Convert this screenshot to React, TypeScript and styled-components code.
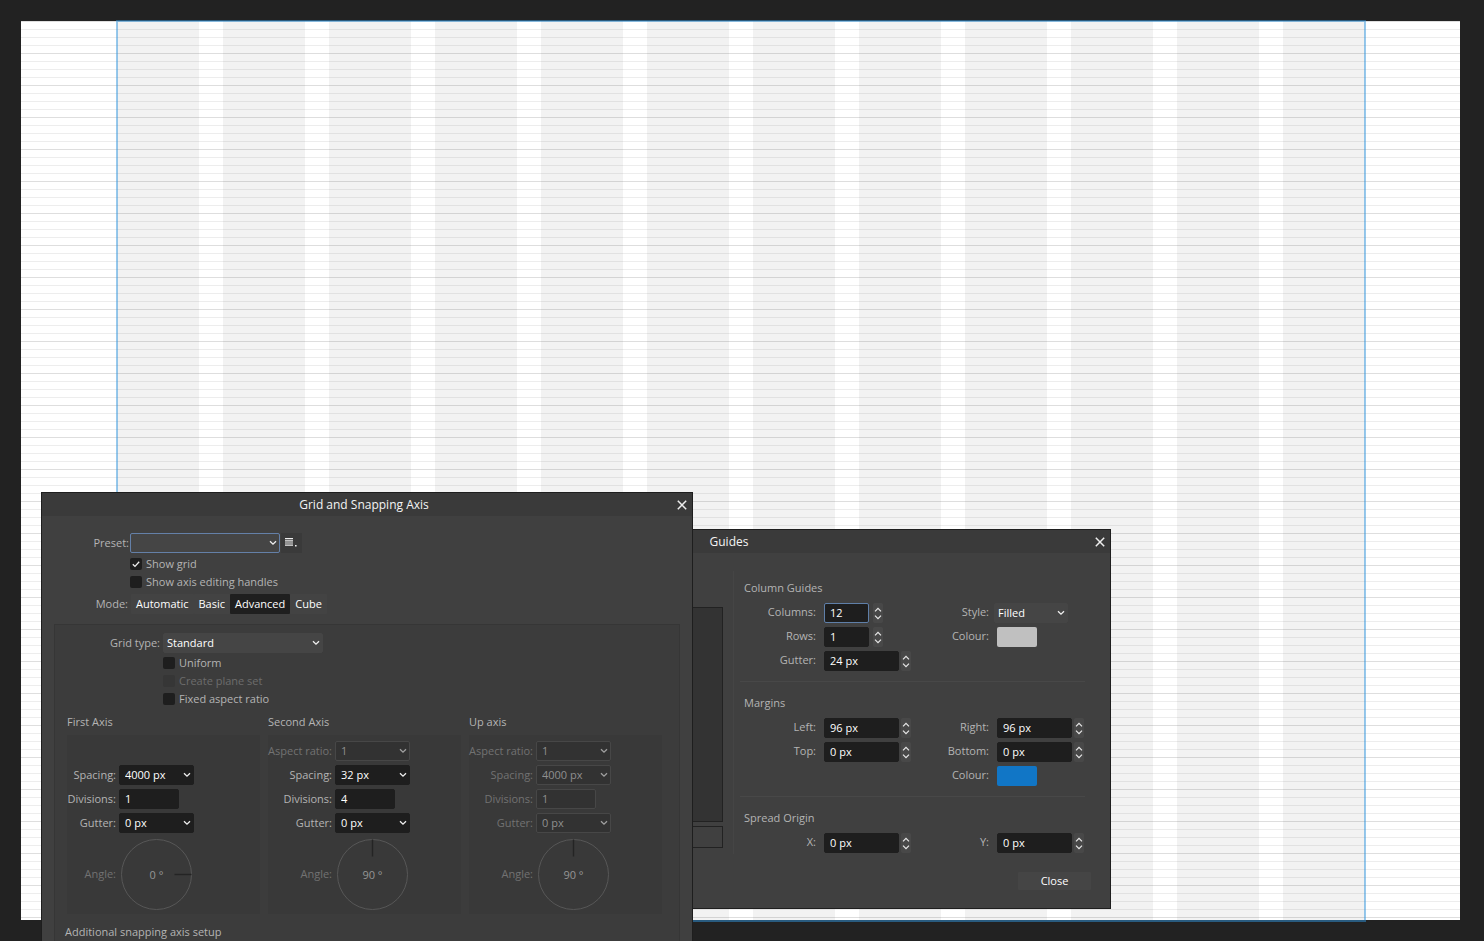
import React, { useId, useState } from 'react';
import styled, { createGlobalStyle, css } from 'styled-components';

const GlobalStyle = createGlobalStyle`
  *, *::before, *::after { box-sizing: border-box; }
  body {
    margin: 0;
    background: #222;
  }
  body, button, input, select {
    font-family: "Open Sans", "Noto Sans", sans-serif;
    font-size: 11px;
    line-height: 20px;
  }
`;

/* ---------- Artboard ---------- */

const Workspace = styled.main`
  position: relative;
  display: flex;
  height: 100vh;
  padding: 21px 24px 21px 21px;
  overflow: hidden;
  background: #222;
  color: #b4b4b4;
`;

const Artboard = styled.section`
  position: relative;
  display: flex;
  flex: 1;
  padding: 0 95px 0 96px;
  background: #fff;

  &::after {
    content: '';
    position: absolute;
    inset: 0;
    background:
      repeating-linear-gradient(to bottom, #00000010 0 1px, transparent 1px 32px),
      repeating-linear-gradient(to bottom, #00000012 0 1px, transparent 1px 8px);
  }
`;

const Columns = styled.div`
  position: relative;
  display: flex;
  flex: 1;
  gap: 24px;

  &::after {
    content: '';
    position: absolute;
    z-index: 1;
    inset: -1px -1px -2px;
    border: 2px solid #2f93dc80;
  }
`;

const Column = styled.div`
  flex: 1;
  background: #f2f2f2;
`;

/* ---------- Windows ---------- */

const Window = styled.section<{ $left: number; $top: number; $width: number }>`
  position: absolute;
  z-index: 2;
  left: ${(p) => p.$left}px;
  top: ${(p) => p.$top}px;
  width: ${(p) => p.$width}px;
  border: 1px solid #1e1e1e;
  background: #404040;
`;

const TitleBar = styled.header<{ $lead: number }>`
  display: grid;
  grid-template-columns: ${(p) => p.$lead}px 1fr 20px;
  align-items: center;
  height: 23px;
  background: #3a3a3a;
`;

const Title = styled.h2`
  grid-column: 2;
  margin: 0;
  font-size: 12px;
  font-weight: 400;
  text-align: center;
  color: #f4f4f4;
`;

const CloseIconButton = styled.button`
  display: grid;
  place-items: center start;
  height: 20px;
  padding: 0 0 0 5px;
  border: 0;
  background: none;
  color: #eee;
`;

/* ---------- Form controls ---------- */

const Row = styled.div<{ $gap?: number }>`
  display: flex;
  align-items: center;
  gap: ${(p) => p.$gap ?? 3}px;
`;

const Label = styled.label<{ $width: number; $dim?: boolean }>`
  width: ${(p) => p.$width}px;
  flex: none;
  text-align: right;
  white-space: nowrap;
  color: ${(p) => (p.$dim ? '#727272' : '#b4b4b4')};
`;

const disabledField = css`
  &:disabled {
    border: 1px solid #474747;
    background: #323232;
    color: #8f8f8f;
    opacity: 1;
  }
`;

const TextInput = styled.input<{ $width: number; $active?: boolean }>`
  width: ${(p) => p.$width}px;
  height: 20px;
  padding: 0 5px;
  border: 1px solid ${(p) => (p.$active ? '#5f7fa8' : '#1e1e1e')};
  border-radius: 2px;
  outline: 0;
  background: #1e1e1e;
  color: #fff;
  ${disabledField}
`;

const SelectWrap = styled.span<{ $width: number }>`
  display: grid;
  grid-template-columns: 1fr 11px;
  align-items: center;
  width: ${(p) => p.$width}px;

  svg {
    grid-area: 1 / 2;
    pointer-events: none;
  }
`;

const tones = {
  dark: css`
    border: 1px solid #1e1e1e;
    background: #1e1e1e;
  `,
  flat: css`
    border: 1px solid #454545;
    background: #454545;
  `,
  focus: css`
    border: 1px solid #6480a8;
    background: #454545;
  `,
};

const NativeSelect = styled.select<{ $tone: keyof typeof tones }>`
  grid-area: 1 / 1 / 2 / 3;
  width: 100%;
  height: 20px;
  padding: 0 12px 0 ${(p) => (p.$tone === 'flat' ? 3 : 5)}px;
  border-radius: 2px;
  outline: 0;
  appearance: none;
  line-height: 16px;
  color: #fff;
  ${(p) => tones[p.$tone]}
  ${disabledField}
`;

const CheckLabel = styled.label<{ $dim?: boolean }>`
  display: flex;
  align-items: center;
  gap: 4px;
  height: 18px;
  color: ${(p) => (p.$dim ? '#6c6c6c' : '#b4b4b4')};
`;

const CheckMark = styled.span<{ $dim?: boolean }>`
  display: grid;
  width: 12px;
  height: 12px;
  border-radius: 2px;
  background: ${(p) => (p.$dim ? '#363636' : '#1e1e1e')};

  input, svg {
    grid-area: 1 / 1;
    margin: 0;
  }
  input {
    width: 12px;
    height: 12px;
    appearance: none;
  }
  svg {
    pointer-events: none;
  }
`;

const SpinnerStack = styled.span`
  display: flex;
  flex-direction: column;
  width: 10px;
  height: 20px;
  padding: 3px 0;
  border-radius: 2px;
  background: #484848;
`;

const SpinnerButton = styled.button`
  display: grid;
  flex: 1;
  place-items: center;
  padding: 0;
  border: 0;
  background: none;
  line-height: 0;
  color: #e8e8e8;
`;

const Swatch = styled.button<{ $color: string }>`
  width: 40px;
  height: 20px;
  border: 0;
  border-radius: 2px;
  background: ${(p) => p.$color};
`;

/* ---------- Grid window layout ---------- */

const GridBody = styled.div`
  padding: 17px 12px 0;
`;

const PresetMenuButton = styled.button`
  display: grid;
  place-items: center start;
  width: 21px;
  height: 20px;
  padding: 0 0 0 3px;
  border: 0;
  background: #3a3a3a;
  color: #eee;
`;

const CheckList = styled.div<{ $indent: number; $top: number }>`
  display: flex;
  flex-direction: column;
  align-items: flex-start;
  margin: ${(p) => p.$top}px 0 3px ${(p) => p.$indent}px;
`;

const ModeTabs = styled.div`
  display: flex;
`;

const ModeTab = styled.button<{ $selected: boolean }>`
  height: 20px;
  padding: 0 5px;
  border: 0;
  border-radius: 1px;
  background: ${(p) => (p.$selected ? '#1f1f1f' : '#434343')};
  color: #fff;
`;

const Panel = styled.div`
  margin-top: 10px;
  padding: 8px 17px 24px 10px;
  border: 1px solid #363636;
  background: #3c3c3c;
`;

const Axes = styled.div`
  display: grid;
  grid-template-columns: repeat(3, 1fr);
  gap: 8px;
  padding: 1px 0 0 2px;
`;

const Heading = styled.h3`
  margin: 0;
  font-size: 11px;
  font-weight: 400;
  color: #b4b4b4;
`;

const AdditionalHeading = styled(Heading)`
  margin-top: 8px;
`;

const AxisBox = styled.div`
  display: flex;
  flex-direction: column;
  justify-content: flex-end;
  gap: 4px;
  height: 179px;
  margin-top: 3px;
  padding-bottom: 4px;
  background: #393939;
`;

const Dial = styled.span`
  display: grid;
  place-items: center;
  margin: 2px 0 0 2px;

  svg, input {
    grid-area: 1 / 1;
  }
  input {
    width: 40px;
    padding: 0;
    border: 0;
    background: none;
    text-align: center;
    color: #959595;
  }
`;

/* ---------- Guides window layout ---------- */

const GuidesBody = styled.div`
  display: flex;
  padding: 0 19px 18px 15px;
`;

const Sidebar = styled.div`
  display: flex;
  flex-direction: column;
  gap: 4px;
  width: 360px;
  padding-top: 54px;
`;

const GuideList = styled.div`
  height: 215px;
  border: 1px solid #222;
  background: #333;
`;

const GuideToolbar = styled.div`
  height: 22px;
  border: 1px solid #222;
`;

const Details = styled.div`
  flex: 1;
  padding-left: 10px;
  padding-top: 25px;

  label {
    padding-bottom: 2px;
    line-height: 18px;
  }
`;

const Divider = styled.div`
  width: 1px;
  margin: 18px 0 36px 10px;
  background: #454545;
`;

const Fields = styled.div`
  display: grid;
  grid-template-columns: 176px 1fr;
  margin-top: 5px;
`;

const FieldColumn = styled.div`
  display: flex;
  flex-direction: column;
  gap: 4px;
`;

const Rule = styled.hr`
  height: 1px;
  margin: 10px 6px 11px -4px;
  border: 0;
  background: #484848;
`;

const Footer = styled.footer`
  display: flex;
  justify-content: flex-end;
  margin-top: 19px;
`;

const CloseButton = styled.button`
  width: 73px;
  height: 18px;
  padding: 0;
  border: 0;
  border-radius: 1px;
  background: #454545;
  line-height: 18px;
  color: #fff;
`;

/* ---------- Icons ---------- */

const CrossIcon = () => (
  <svg width="10" height="10" viewBox="0 0 10 10" fill="none" stroke="currentColor" strokeWidth="1.5">
    <path d="M.8.8l8.4 8.4M9.2.8L.8 9.2" />
  </svg>
);

const ChevronIcon = ({ dim }: { dim?: boolean }) => (
  <svg width="8" height="6" viewBox="0 0 8 6" fill="none" stroke={dim ? '#a0a0a0' : '#f0f0f0'} strokeWidth="1.3">
    <path d="M1 1.2l3 3 3-3" />
  </svg>
);

const MenuIcon = () => (
  <svg width="14" height="10" viewBox="0 0 14 10" fill="currentColor">
    <path d="M1 0h8v1.2H1zM1 2.2h8v1.2H1zM1 4.4h8v1.2H1zM1 6.6h8v1.2H1zM11 7h1.6v1.6H11z" />
  </svg>
);

const TickIcon = () => (
  <svg width="12" height="12" viewBox="0 0 12 12" fill="none" stroke="#f0f0f0" strokeWidth="1.3">
    <path d="M2.8 6.2l2.2 2.2 4.2-4.6" />
  </svg>
);

/* ---------- Components ---------- */

function TitledBar({ title, lead }: { title: string; lead: number }) {
  return (
    <TitleBar $lead={lead}>
      <Title>{title}</Title>
      <CloseIconButton aria-label={`Close ${title}`}>
        <CrossIcon />
      </CloseIconButton>
    </TitleBar>
  );
}

type DropDownProps = {
  label: string;
  labelWidth: number;
  width: number;
  value: string;
  tone?: keyof typeof tones;
  gap?: number;
  disabled?: boolean;
  children?: React.ReactNode;
};

function DropDown({ label, labelWidth, width, value, tone = 'dark', gap, disabled, children }: DropDownProps) {
  const id = useId();
  return (
    <Row $gap={gap}>
      <Label htmlFor={id} $width={labelWidth} $dim={disabled}>{label}</Label>
      <SelectWrap $width={width}>
        <NativeSelect id={id} $tone={tone} disabled={disabled} defaultValue={value}>
          <option>{value}</option>
        </NativeSelect>
        <ChevronIcon dim={disabled} />
      </SelectWrap>
      {children}
    </Row>
  );
}

function Check({ label, checked, disabled }: { label: string; checked?: boolean; disabled?: boolean }) {
  const [on, setOn] = useState(Boolean(checked));
  return (
    <CheckLabel $dim={disabled}>
      <CheckMark $dim={disabled}>
        <input type="checkbox" checked={on} disabled={disabled} onChange={() => setOn(!on)} />
        {on && <TickIcon />}
      </CheckMark>
      {label}
    </CheckLabel>
  );
}

type AxisProps = {
  title: string;
  labelWidth: number;
  aspect?: string;
  spacing: string;
  divisions: string;
  angle: number;
  disabled?: boolean;
};

function Axis({ title, labelWidth, aspect, spacing, divisions, angle, disabled }: AxisProps) {
  const divisionsId = useId();
  const angleId = useId();
  return (
    <div>
      <Heading>{title}</Heading>
      <AxisBox>
        {aspect && <DropDown label="Aspect ratio:" labelWidth={labelWidth} width={75} value={aspect} disabled />}
        <DropDown label="Spacing:" labelWidth={labelWidth} width={75} value={spacing} disabled={disabled} />
        <Row>
          <Label htmlFor={divisionsId} $width={labelWidth} $dim={disabled}>Divisions:</Label>
          <TextInput id={divisionsId} $width={60} defaultValue={divisions} disabled={disabled} />
        </Row>
        <DropDown label="Gutter:" labelWidth={labelWidth} width={75} value="0 px" disabled={disabled} />
        <Row>
          <Label htmlFor={angleId} $width={labelWidth} $dim>Angle:</Label>
          <Dial>
            <svg width="71" height="71" viewBox="0 0 71 71" fill="none">
              <circle cx="35.5" cy="35.5" r="35" stroke="#575757" />
              <path d="M53.5 35.5h17" stroke="#242424" strokeWidth="1.4" transform={`rotate(${-angle} 35.5 35.5)`} />
            </svg>
            <input id={angleId} defaultValue={`${angle} °`} disabled />
          </Dial>
        </Row>
      </AxisBox>
    </div>
  );
}

function GridWindow() {
  const [mode, setMode] = useState('Advanced');
  return (
    <Window $left={41} $top={492} $width={652} aria-label="Grid and Snapping Axis">
      <TitledBar title="Grid and Snapping Axis" lead={14} />
      <GridBody>
        <DropDown label="Preset:" labelWidth={75} width={150} value="" tone="focus" gap={1}>
          <PresetMenuButton aria-label="Preset options">
            <MenuIcon />
          </PresetMenuButton>
        </DropDown>
        <CheckList $indent={76} $top={2}>
          <Check label="Show grid" checked />
          <Check label="Show axis editing handles" />
        </CheckList>
        <Row>
          <Label as="span" $width={74}>Mode:</Label>
          <ModeTabs>
            {['Automatic', 'Basic', 'Advanced', 'Cube'].map((name) => (
              <ModeTab key={name} $selected={name === mode} onClick={() => setMode(name)}>
                {name}
              </ModeTab>
            ))}
          </ModeTabs>
        </Row>
        <Panel>
          <DropDown label="Grid type:" labelWidth={95} width={160} value="Standard" tone="flat" />
          <CheckList $indent={98} $top={1}>
            <Check label="Uniform" />
            <Check label="Create plane set" disabled />
            <Check label="Fixed aspect ratio" />
          </CheckList>
          <Axes>
            <Axis title="First Axis" labelWidth={49} spacing="4000 px" divisions="1" angle={0} />
            <Axis title="Second Axis" labelWidth={64} aspect="1" spacing="32 px" divisions="4" angle={90} />
            <Axis title="Up axis" labelWidth={64} aspect="1" spacing="4000 px" divisions="1" angle={90} disabled />
          </Axes>
          <AdditionalHeading>Additional snapping axis setup</AdditionalHeading>
        </Panel>
      </GridBody>
    </Window>
  );
}

type StepperProps = { label: string; value: string; labelWidth?: number; short?: boolean; active?: boolean };

function Stepper({ label, value, labelWidth = 72, short, active }: StepperProps) {
  const id = useId();
  return (
    <Row $gap={8}>
      <Label htmlFor={id} $width={labelWidth}>{label}</Label>
      <Row $gap={short ? 4 : 2}>
        <TextInput id={id} $width={short ? 45 : 75} $active={active} defaultValue={value} />
        <SpinnerStack>
          <SpinnerButton aria-label={`Increase ${label}`}>
            <svg width="8" height="6" viewBox="0 0 8 6" fill="none" stroke="currentColor" strokeWidth="1.2">
              <path d="M1 4.4l3-3 3 3" />
            </svg>
          </SpinnerButton>
          <SpinnerButton aria-label={`Decrease ${label}`}>
            <svg width="8" height="6" viewBox="0 0 8 6" fill="none" stroke="currentColor" strokeWidth="1.2">
              <path d="M1 1.6l3 3 3-3" />
            </svg>
          </SpinnerButton>
        </SpinnerStack>
      </Row>
    </Row>
  );
}

function ColourField({ color }: { color: string }) {
  const id = useId();
  return (
    <Row $gap={8}>
      <Label htmlFor={id} $width={69}>Colour:</Label>
      <Swatch id={id} $color={color} />
    </Row>
  );
}

function GuidesWindow() {
  return (
    <Window $left={347} $top={529} $width={764} aria-label="Guides">
      <TitledBar title="Guides" lead={20} />
      <GuidesBody>
        <Sidebar>
          <GuideList />
          <GuideToolbar />
        </Sidebar>
        <Divider />
        <Details>
          <Heading>Column Guides</Heading>
          <Fields>
            <FieldColumn>
              <Stepper label="Columns:" value="12" short active />
              <Stepper label="Rows:" value="1" short />
              <Stepper label="Gutter:" value="24 px" />
            </FieldColumn>
            <FieldColumn>
              <DropDown label="Style:" labelWidth={69} width={74} value="Filled" tone="flat" gap={5} />
              <ColourField color="#c0c0c0" />
            </FieldColumn>
          </Fields>
          <Rule />
          <Heading>Margins</Heading>
          <Fields>
            <FieldColumn>
              <Stepper label="Left:" value="96 px" />
              <Stepper label="Top:" value="0 px" />
            </FieldColumn>
            <FieldColumn>
              <Stepper label="Right:" value="96 px" labelWidth={69} />
              <Stepper label="Bottom:" value="0 px" labelWidth={69} />
              <ColourField color="#1176c6" />
            </FieldColumn>
          </Fields>
          <Rule />
          <Heading>Spread Origin</Heading>
          <Fields>
            <Stepper label="X:" value="0 px" />
            <Stepper label="Y:" value="0 px" labelWidth={69} />
          </Fields>
          <Footer>
            <CloseButton>Close</CloseButton>
          </Footer>
        </Details>
      </GuidesBody>
    </Window>
  );
}

export default function App() {
  return (
    <>
      <GlobalStyle />
      <Workspace>
        <Artboard aria-label="Artboard">
          <Columns>
            {Array.from({ length: 12 }, (_, i) => (
              <Column key={i} />
            ))}
          </Columns>
        </Artboard>
        <GuidesWindow />
        <GridWindow />
      </Workspace>
    </>
  );
}
